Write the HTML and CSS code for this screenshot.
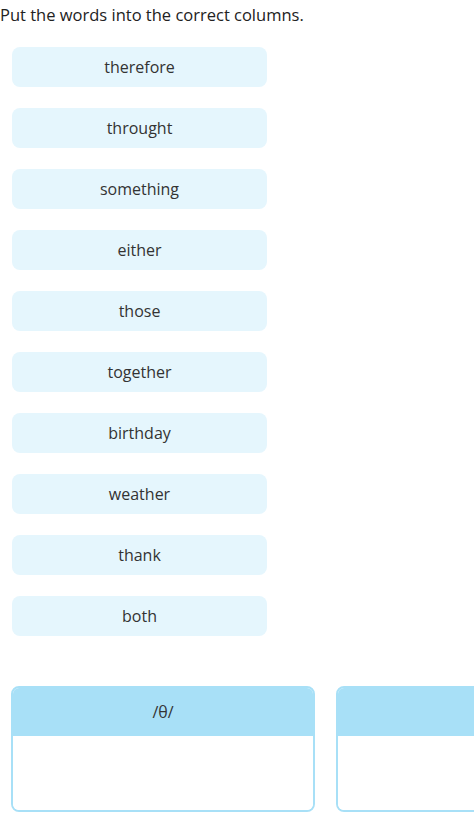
FILE: index.html
```html
<!DOCTYPE html>
<html lang="en">
<head>
    <meta charset="UTF-8">
    <meta name="viewport" content="width=device-width, initial-scale=1.0">
    <title>Sort the words</title>
    <link rel="stylesheet" href="styles.css">
</head>
<body>
    <p class="task">Put the words into the correct columns.</p>
    <div class="word-list">
        <div class="word">therefore</div>
        <div class="word">throught</div>
        <div class="word">something</div>
        <div class="word">either</div>
        <div class="word">those</div>
        <div class="word">together</div>
        <div class="word">birthday</div>
        <div class="word">weather</div>
        <div class="word">thank</div>
        <div class="word">both</div>
    </div>
    <div class="columns">
        <div class="column">
            <div class="column-head">/θ/</div>
            <div class="column-body"></div>
        </div>
        <div class="column">
            <div class="column-head"></div>
            <div class="column-body"></div>
        </div>
    </div>
</body>
</html>
```
FILE: styles.css
```css
body {
    margin: 0;
    padding: 0;
    overflow: hidden;
    background: #fff;
    color: #333;
    font-family: "Open Sans", "Noto Sans", sans-serif;
}

.task {
    margin: 0;
    padding-top: 4px;
    font-size: 16.5px;
    line-height: 22px;
    color: #222;
}

.word-list {
    display: flex;
    flex-direction: column;
    gap: 21px;
    padding: 21px 0 0 12px;
}

.word {
    width: 255px;
    height: 40px;
    display: flex;
    align-items: center;
    justify-content: center;
    background: #e5f6fd;
    border-radius: 8px;
    font-size: 16px;
    color: #333;
}

.columns {
    display: flex;
    gap: 21px;
    padding: 50px 0 0 11px;
    width: 800px;
}

.column {
    flex: 0 0 304px;
    height: 126px;
    box-sizing: border-box;
    border: 2px solid #a8e0f7;
    border-radius: 8px;
    overflow: hidden;
    display: flex;
    flex-direction: column;
}

.column-head {
    height: 48px;
    display: flex;
    align-items: center;
    justify-content: center;
    background: #a8e0f7;
    font-size: 16px;
    color: #333;
}

.column-body {
    flex: 1;
    background: #fff;
}
```
